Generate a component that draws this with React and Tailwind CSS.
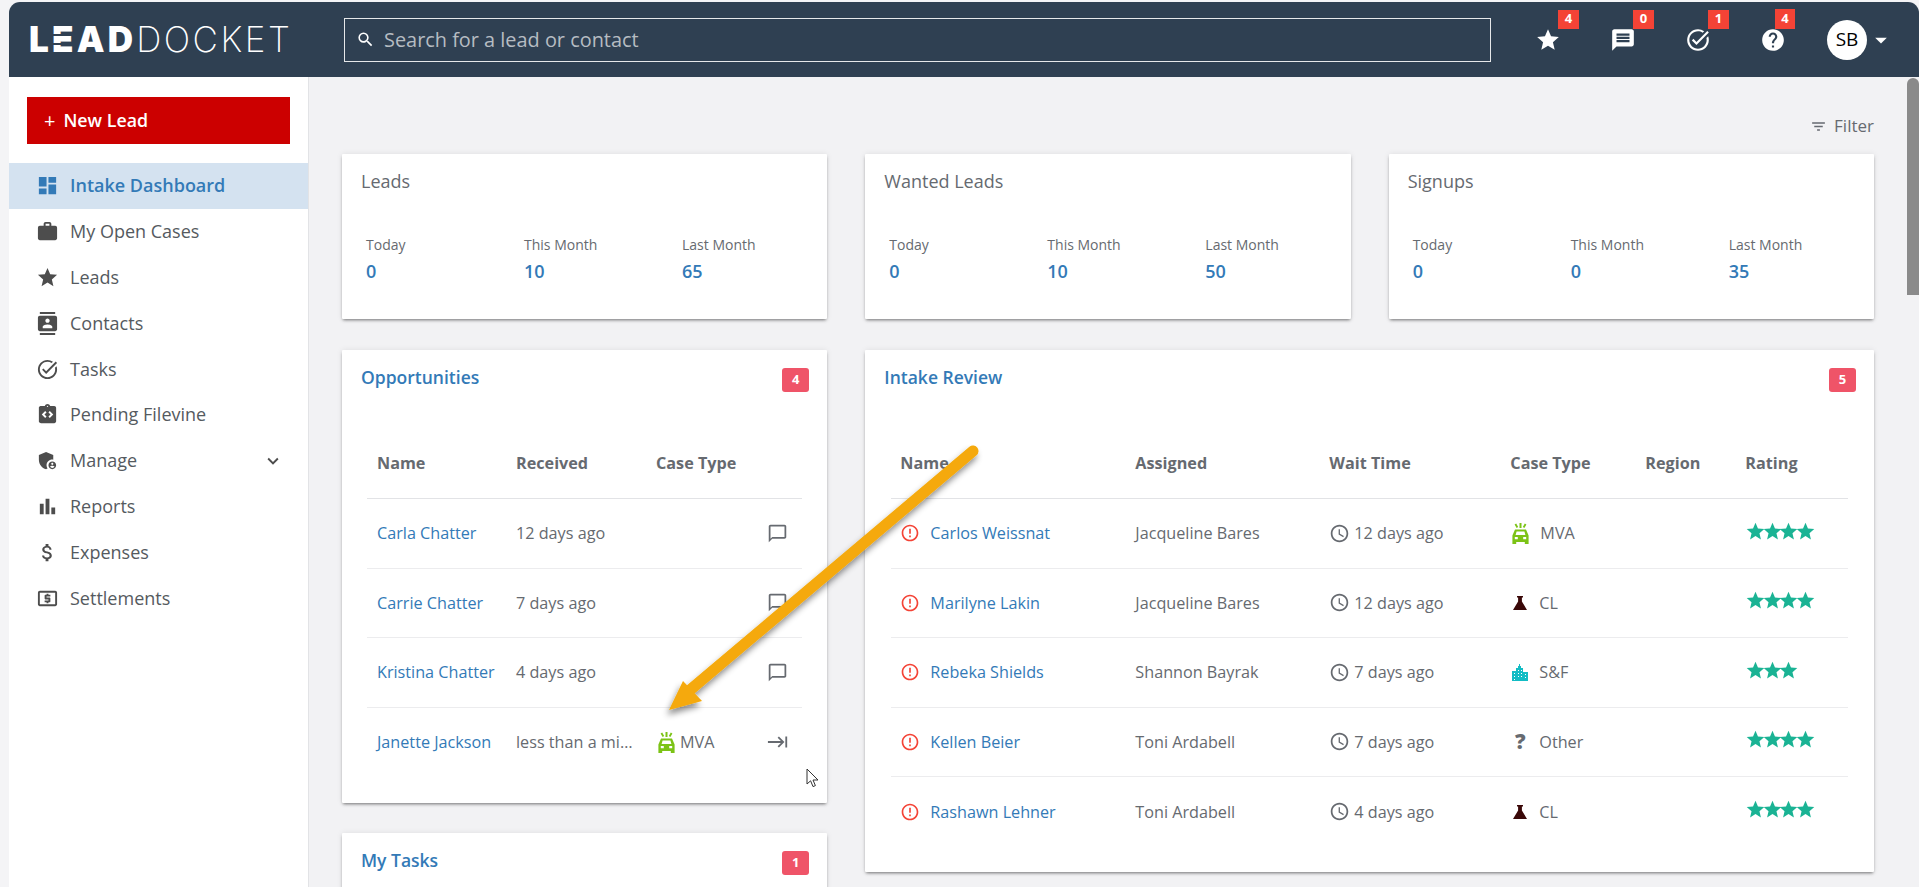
import {
  MdDashboard, MdWork, MdStar, MdContacts, MdTaskAlt, MdIntegrationInstructions,
  MdAdminPanelSettings, MdBarChart, MdAttachMoney, MdLocalAtm, MdKeyboardArrowDown,
  MdMessage, MdHelp, MdArrowDropDown, MdSearch, MdFilterList, MdChatBubbleOutline,
  MdKeyboardTab, MdErrorOutline, MdAccessTime,
} from "react-icons/md";

const NAV = [
  { label: "Intake Dashboard", icon: MdDashboard, active: true },
  { label: "My Open Cases", icon: MdWork },
  { label: "Leads", icon: MdStar },
  { label: "Contacts", icon: MdContacts },
  { label: "Tasks", icon: MdTaskAlt },
  { label: "Pending Filevine", icon: MdIntegrationInstructions },
  { label: "Manage", icon: MdAdminPanelSettings, more: true },
  { label: "Reports", icon: MdBarChart },
  { label: "Expenses", icon: MdAttachMoney },
  { label: "Settlements", icon: MdLocalAtm },
];

const STATS = [
  { title: "Leads", today: 0, month: 10, last: 65 },
  { title: "Wanted Leads", today: 0, month: 10, last: 50 },
  { title: "Signups", today: 0, month: 0, last: 35 },
];

const OPPORTUNITIES = [
  { name: "Carla Chatter", received: "12 days ago" },
  { name: "Carrie Chatter", received: "7 days ago" },
  { name: "Kristina Chatter", received: "4 days ago" },
  { name: "Janette Jackson", received: "less than a mi…", mva: true },
];

const REVIEWS = [
  { name: "Carlos Weissnat", who: "Jacqueline Bares", wait: "12 days ago", type: "MVA", stars: 4 },
  { name: "Marilyne Lakin", who: "Jacqueline Bares", wait: "12 days ago", type: "CL", stars: 4 },
  { name: "Rebeka Shields", who: "Shannon Bayrak", wait: "7 days ago", type: "S&F", stars: 3 },
  { name: "Kellen Beier", who: "Toni Ardabell", wait: "7 days ago", type: "Other", stars: 4 },
  { name: "Rashawn Lehner", who: "Toni Ardabell", wait: "4 days ago", type: "CL", stars: 4 },
];

const CarIcon = () => (
  <svg viewBox="0 0 17 21" className="h-[21px] w-[17px] shrink-0 fill-[#7cc316]">
    <rect x="7.5" y="0" width="2" height="5" />
    <path d="M2.6 1.4L4.2.4l2 3.6-1.6 1zM14.4 1.4L12.8.4l-2 3.6 1.6 1z" />
    <path d="M3 6.5h11l2.6 6V21h-3.8v-2H4.200v2H.4v-8.500zM4.600 8.500l-1 3.500h9.800l-1-3.500zM2.800 14v2.200h3V14zM11.200 14v2.200h3V14z" fillRule="evenodd" />
  </svg>
);

const FlaskIcon = () => (
  <svg viewBox="0 0 16 16" className="h-4 w-4 shrink-0 fill-[#3a0808]">
    <path d="M5 1h6v1.400H9.900v4L15 15H1l5.100-8.600v-4H5z" />
  </svg>
);

const BuildingIcon = () => (
  <svg viewBox="0 0 16 17" className="h-[17px] w-4 shrink-0 fill-[#12bcc4]">
    <path d="M0 7h4V4h2V2h1V0h1v2h1v2h2v4h5v9H0z" />
    <path
      className="fill-white"
      d="M2 9h1v1H2zM2 12h1v1H2zM2 15h1v1H2zM6 6h1v1H6zM9 6h1v1H9zM6 9h1v1H6zM9 9h1v1H9zM6 12h1v1H6zM9 12h1v1H9zM13 10h1v1h-1zM13 13h1v1h-1z"
    />
  </svg>
);

function CaseIcon({ type }) {
  if (type === "MVA") return <CarIcon />;
  if (type === "CL") return <FlaskIcon />;
  if (type === "S&F") return <BuildingIcon />;
  return <span className="w-4 shrink-0 text-center text-[21px] font-extrabold leading-none text-[#666a70]">?</span>;
}

function Badge({ children }) {
  return (
    <span className="flex h-6 w-[27px] items-center justify-center rounded-[3px] bg-[#ef5468] text-[13px] font-bold text-white">
      {children}
    </span>
  );
}

function HeaderIcon({ icon: Icon, count, help }) {
  return (
    <div className="relative flex h-6 w-6 items-center justify-center">
      <Icon size={26} className="shrink-0 text-white" />
      <span
        className={`absolute flex items-center justify-center bg-[#f44336] text-[13px] font-bold text-white ${
          help ? "-top-[19px] left-[14px] h-5 w-5" : "-top-[18px] left-[22px] h-[19px] w-[21px]"
        }`}
      >
        {count}
      </span>
    </div>
  );
}

function Logo() {
  return (
    <div className="flex w-[315px] shrink-0 items-baseline font-['Inter',sans-serif] text-[35px] leading-none text-white">
      <span className="font-black tracking-[3.2px]">
        L
        <span className="relative inline-block">
          E
          {/* the E in the logo has no stem, just three bars */}
          <span className="absolute left-0 top-[12px] h-[2px] w-[22px] bg-[#2f4052]" />
          <span className="absolute left-0 top-[21px] h-[2px] w-[22px] bg-[#2f4052]" />
        </span>
        AD
      </span>
      <span className="font-extralight tracking-[2.5px]">DOCKET</span>
    </div>
  );
}

function Header() {
  return (
    <header className="flex h-[75px] shrink-0 items-center rounded-t-[11px] bg-[#2f4052] pl-5 pr-[28px]">
      <Logo />
      <div className="flex h-[44px] w-[1147px] shrink-0 items-center border border-[#e6e8ea] pl-[11px]">
        <MdSearch size={19} className="text-white" />
        <span className="ml-[9px] text-[19.9px] text-[#b6bcc2]">Search for a lead or contact</span>
      </div>
      <div className="ml-[45px] flex items-center gap-[51px]">
        <HeaderIcon icon={MdStar} count={4} />
        <HeaderIcon icon={MdMessage} count={0} />
        <HeaderIcon icon={MdTaskAlt} count={1} />
        <HeaderIcon icon={MdHelp} count={4} help />
      </div>
      <div className="ml-[42px] flex h-10 w-10 shrink-0 items-center justify-center rounded-full bg-white text-[19px] text-black">SB</div>
      <MdArrowDropDown size={28} className="shrink-0 text-white" />
    </header>
  );
}

function Sidebar() {
  return (
    <aside className="w-[300px] shrink-0 border-r border-[#e2e3e6] bg-white">
      <div className="pb-[19px] pl-[18px] pt-5">
        <button className="flex h-[47px] w-[263px] items-center bg-[#cc0000] pl-[17px] text-[17.8px] font-semibold text-white">
          <span className="mr-2 text-[20px] font-normal">+</span>New Lead
        </button>
      </div>
      {NAV.map(({ label, icon: Icon, active, more }) => (
        <div
          key={label}
          className={`flex h-[45.8px] items-center pl-[27px] pr-[24px] text-[18px] ${active ? "bg-[#d4e2f0] font-semibold text-[#337ab7]" : "text-[#555a60]"}`}
        >
          <Icon size={23} className={`shrink-0 ${active ? "text-[#337ab7]" : "text-[#4d4d4d]"}`} />
          <span className="ml-[11px]">{label}</span>
          {more && <MdKeyboardArrowDown size={22} className="ml-auto text-[#4d4d4d]" />}
        </div>
      ))}
    </aside>
  );
}

function Card({ children, className = "" }) {
  return (
    <div className={`rounded-[1px] bg-white shadow-[0_2px_3px_-1px_rgba(0,0,0,0.5),0_0_6px_rgba(0,0,0,0.08)] ${className}`}>
      {children}
    </div>
  );
}

function StatCard({ title, today, month, last }) {
  const cells = [["Today", today], ["This Month", month], ["Last Month", last]];
  return (
    <Card className="h-[165px] px-[19px] pt-[15px]">
      <h3 className="text-[18px] font-medium leading-6 text-[#666a70]">{title}</h3>
      <div className="mt-[42px] grid grid-cols-[158px_158px_1fr] pl-[5px]">
        {cells.map(([label, value]) => (
          <div key={label}>
            <div className="text-[14px] leading-5 text-[#666a70]">{label}</div>
            <div className="mt-[6px] text-[18px] font-semibold leading-5 text-[#337ab7]">{value}</div>
          </div>
        ))}
      </div>
    </Card>
  );
}

function CardHead({ title, count, tall }) {
  return (
    <div className={`flex items-start justify-between pl-[19px] pr-[18px] pt-[18px] ${tall ? "h-[79px]" : ""}`}>
      <h3 className="-mt-[3px] text-[17.5px] font-semibold leading-6 text-[#337ab7]">{title}</h3>
      <Badge>{count}</Badge>
    </div>
  );
}

function Opportunities() {
  return (
    <Card className="h-[453px]">
      <CardHead title="Opportunities" count={4} tall />
      <div className="mx-[25px] text-[16.2px] text-[#666a70]">
        <div className="flex h-[70px] items-center border-b border-[#e2e3e6] pl-[10px] font-bold">
          <span className="w-[139px]">Name</span>
          <span className="w-[140px]">Received</span>
          <span>Case Type</span>
        </div>
        {OPPORTUNITIES.map((row, i) => (
          <div key={row.name} className={`flex h-[69.5px] items-center pl-[10px] ${i < 3 ? "border-b border-[#ececee]" : ""}`}>
            <span className="w-[139px] text-[#337ab7]">{row.name}</span>
            <span className="w-[140px] whitespace-nowrap">{row.received}</span>
            <span className="flex w-[111px] items-center gap-[5px] pl-[2px]">
              {row.mva && <CarIcon />}
              {row.mva && "MVA"}
            </span>
            {row.mva ? (
              <MdKeyboardTab size={22} className="text-[#666a70]" />
            ) : (
              <MdChatBubbleOutline size={21} className="text-[#666a70]" />
            )}
          </div>
        ))}
      </div>
    </Card>
  );
}

function IntakeReview() {
  return (
    <Card className="col-span-2 h-[522px]">
      <CardHead title="Intake Review" count={5} tall />
      <div className="mx-[26px] text-[16.2px] text-[#666a70]">
        <div className="flex h-[70px] items-center border-b border-[#e2e3e6] pl-[9px] font-bold">
          <span className="w-[235px]">Name</span>
          <span className="w-[194px]">Assigned</span>
          <span className="w-[181px]">Wait Time</span>
          <span className="w-[135px]">Case Type</span>
          <span className="w-[100px]">Region</span>
          <span>Rating</span>
        </div>
        {REVIEWS.map((row, i) => (
          <div key={row.name} className={`flex h-[69.5px] items-center pl-[9px] ${i < 4 ? "border-b border-[#ececee]" : ""}`}>
            <span className="flex w-[235px] items-center gap-[10px] text-[#337ab7]">
              <MdErrorOutline size={20} className="shrink-0 text-[#f44336]" />
              {row.name}
            </span>
            <span className="w-[194px]">{row.who}</span>
            <span className="flex w-[181px] items-center gap-[4px]">
              <MdAccessTime size={21} className="shrink-0" />
              {row.wait}
            </span>
            <span className="flex w-[135px] items-center gap-[11px] pl-[2px]">
              <CaseIcon type={row.type} />
              {row.type}
            </span>
            <span className="w-[100px]" />
            <span className="-mt-1 flex text-[#1ab394]">
              {Array.from({ length: row.stars }).map((_, s) => (
                <MdStar key={s} size={21} className="-mr-[4.5px] shrink-0" />
              ))}
            </span>
          </div>
        ))}
      </div>
    </Card>
  );
}

export default function App() {
  return (
    <div className="relative h-screen overflow-hidden bg-[#f4f4f6] pl-[9px] pt-[2px] font-['Open_Sans',sans-serif]">
      <div className="flex h-full flex-col">
        <Header />
        <div className="flex min-h-0 flex-1">
          <Sidebar />
          <main className="min-w-0 flex-1 overflow-hidden bg-[#f2f2f4] pl-[33px] pr-[45px]">
            <div className="flex h-[77px] items-end justify-end pb-[18px] text-[17px] font-medium leading-5 text-[#666a70]">
              <div className="flex items-center gap-[7px]">
                <MdFilterList size={17} />
                Filter
              </div>
            </div>
            <div className="grid grid-cols-3 items-start gap-x-[38px] gap-y-[31px]">
              {STATS.map((s) => (
                <StatCard key={s.title} {...s} />
              ))}
              <div className="flex flex-col gap-[30px]">
                <Opportunities />
                <Card className="h-[200px]">
                  <CardHead title="My Tasks" count={1} />
                </Card>
              </div>
              <IntakeReview />
            </div>
          </main>
        </div>
      </div>

      {/* scrollbar thumb */}
      <div className="absolute right-0 top-[78px] h-[217px] w-3 rounded-t-md bg-[#8a8a8a]" />

      {/* annotation arrow */}
      <svg className="pointer-events-none absolute left-0 top-0 h-[887px] w-[1919px]" viewBox="0 0 1919 887">
        <defs>
          <filter id="arrowShadow" x="-20%" y="-20%" width="140%" height="140%">
            <feDropShadow dx="-2" dy="5" stdDeviation="3" floodColor="#000" floodOpacity="0.45" />
          </filter>
        </defs>
        <g filter="url(#arrowShadow)">
          <line x1="973" y1="451" x2="690" y2="690" stroke="#f5a908" strokeWidth="11" strokeLinecap="round" />
          <path d="M669 710L683 681L702 701Z" fill="#f5a908" />
        </g>
      </svg>

      {/* mouse pointer */}
      <svg className="pointer-events-none absolute left-[806px] top-[768px] h-[21px] w-[13px]" viewBox="0 0 13 21">
        <path d="M1 1v15l3.6-3.2L7 18.6l2.4-1-2.4-5.6h5z" fill="#fff" stroke="#333" strokeWidth="1" />
      </svg>
    </div>
  );
}
